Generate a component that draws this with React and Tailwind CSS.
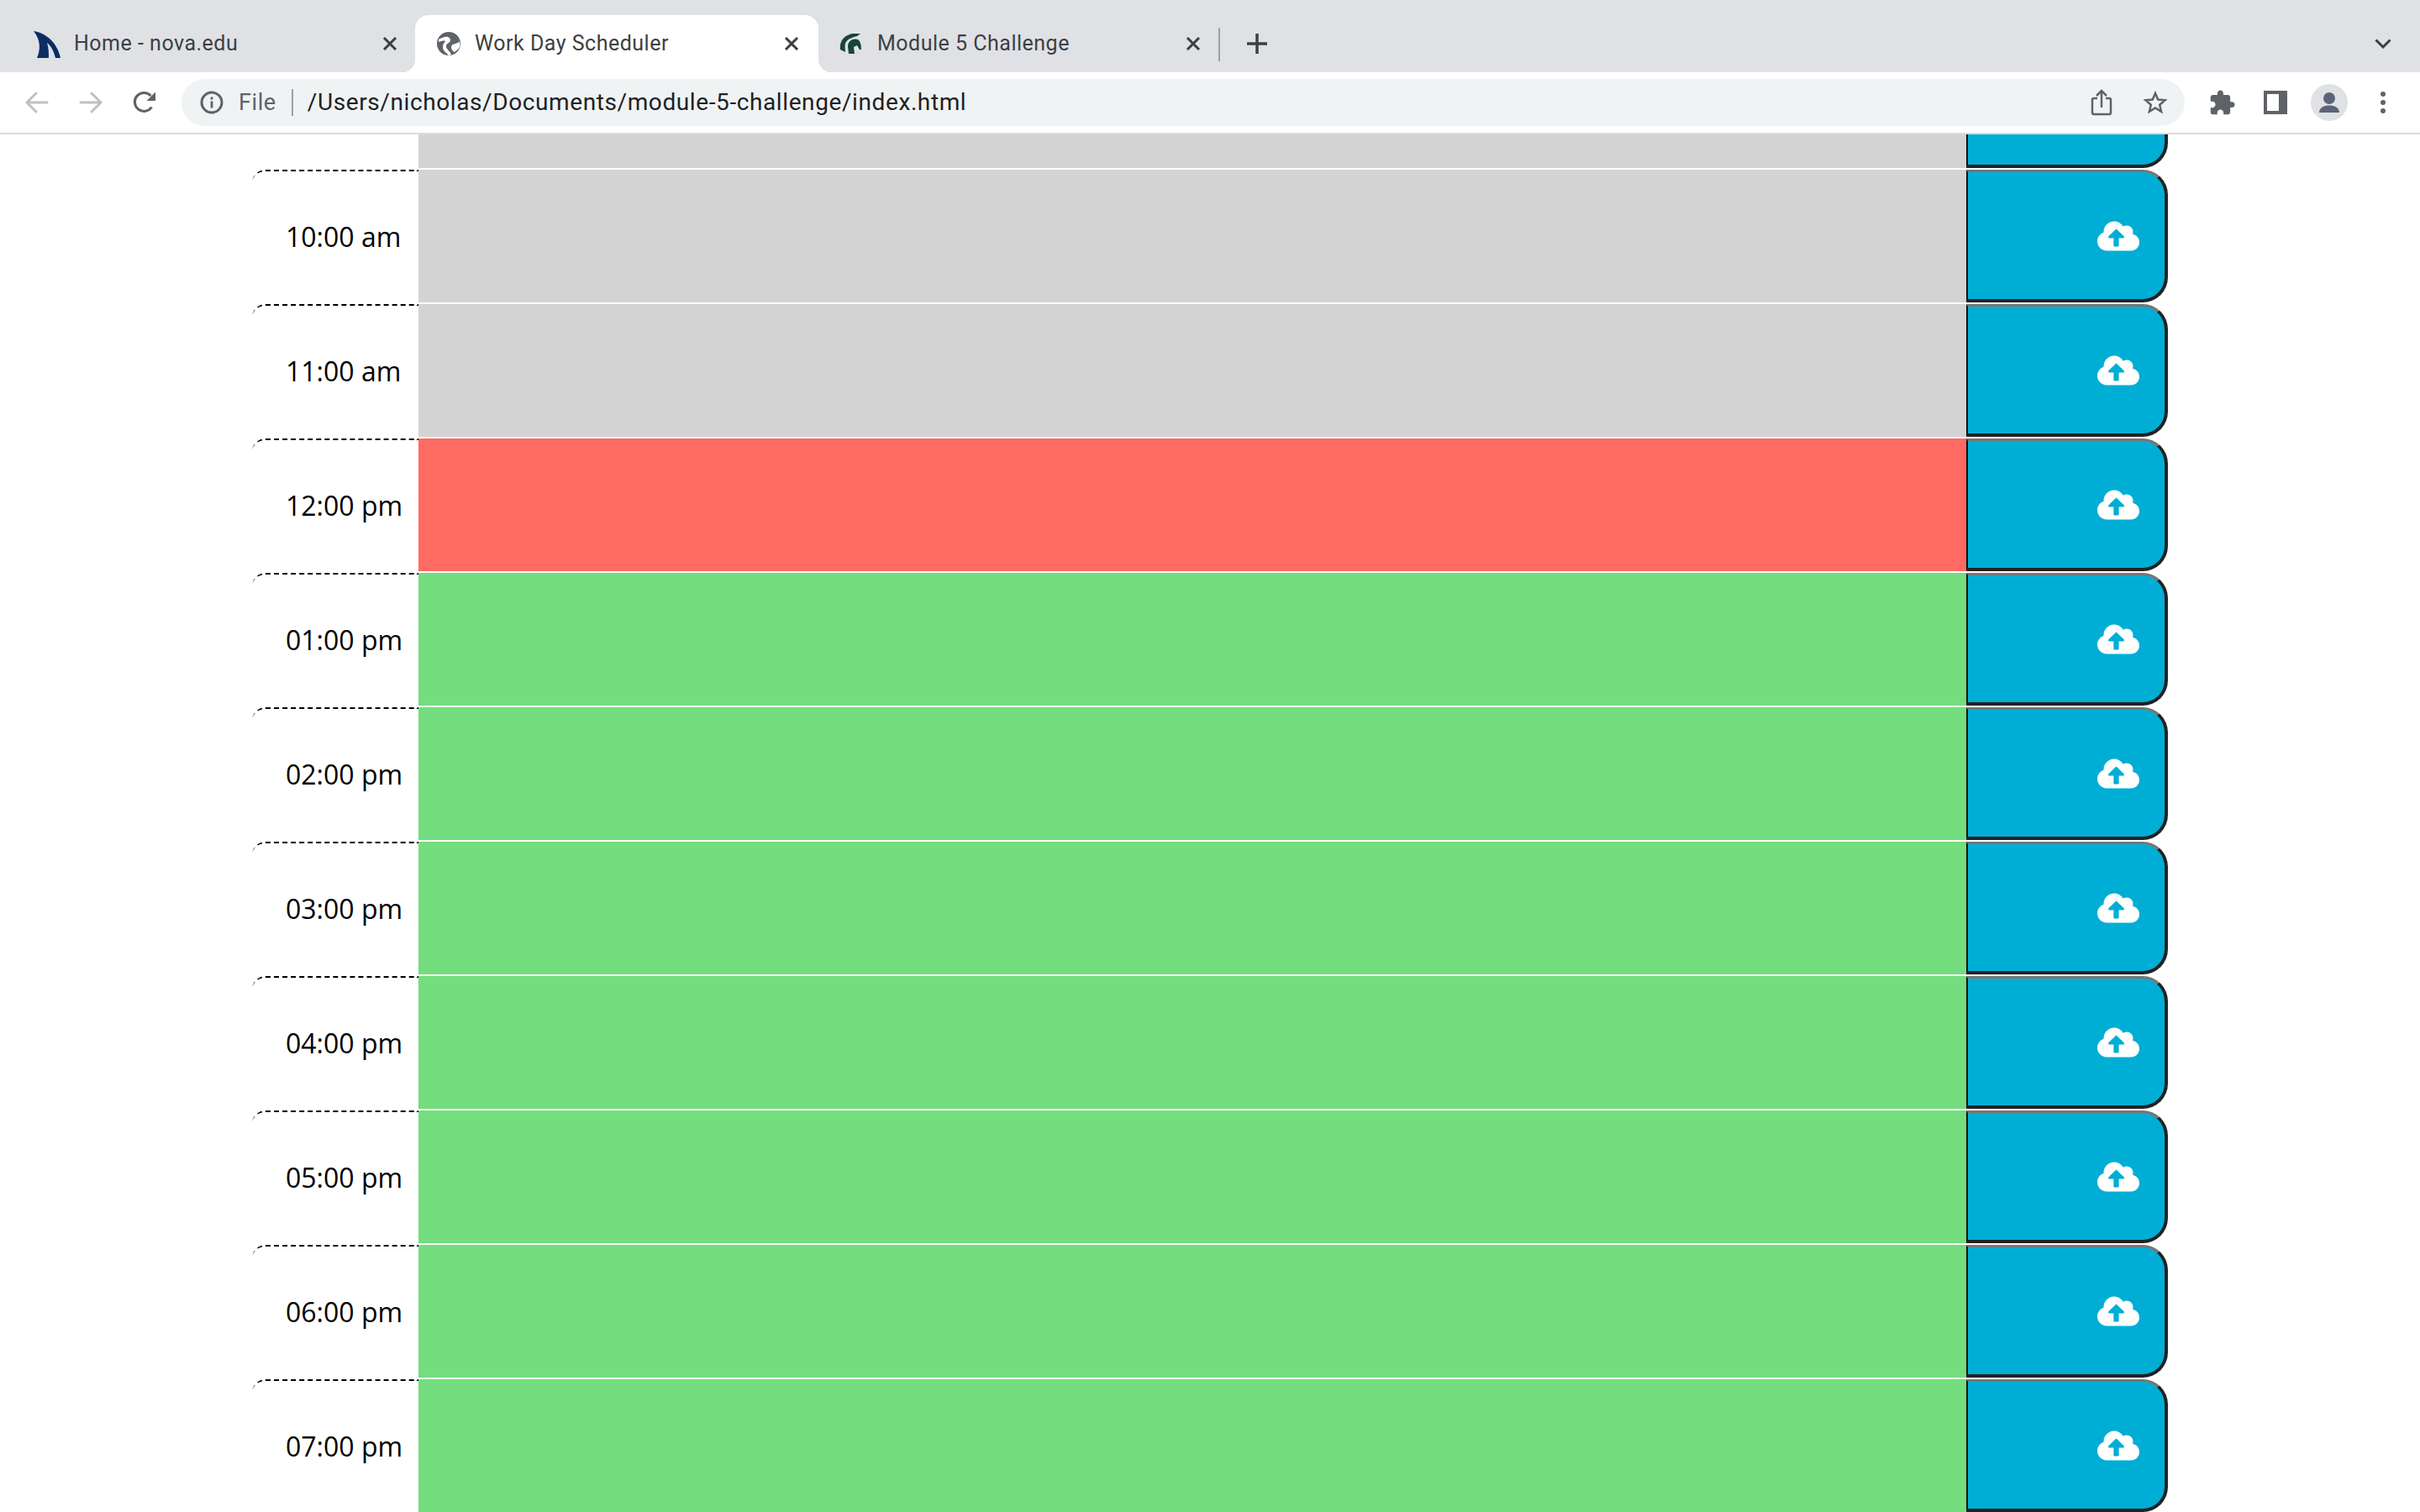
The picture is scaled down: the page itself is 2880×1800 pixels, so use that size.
import React from "react";
import { FaCloudUploadAlt } from "react-icons/fa";

const hours = [
  { label: "09:00 am", color: "bg-[#d3d3d3]" },
  { label: "10:00 am", color: "bg-[#d3d3d3]" },
  { label: "11:00 am", color: "bg-[#d3d3d3]" },
  { label: "12:00 pm", color: "bg-[#ff6a63]" },
  { label: "01:00 pm", color: "bg-[#74dd7e]" },
  { label: "02:00 pm", color: "bg-[#74dd7e]" },
  { label: "03:00 pm", color: "bg-[#74dd7e]" },
  { label: "04:00 pm", color: "bg-[#74dd7e]" },
  { label: "05:00 pm", color: "bg-[#74dd7e]" },
  { label: "06:00 pm", color: "bg-[#74dd7e]" },
  { label: "07:00 pm", color: "bg-[#74dd7e]" },
];

const CloseIcon = () => (
  <svg width="18" height="16" viewBox="0 0 18 16" fill="none" stroke="#3c4043" strokeWidth="3">
    <path d="M2 1l14 14M16 1L2 15" />
  </svg>
);

const NovaIcon = () => (
  <svg width="36" height="36" viewBox="8 8 36 36" className="shrink-0">
    <path
      fill="#0b2d63"
      d="M10 11C20 12 32 20 37 30C40 35 41 39 42 43L36 43C34 35 31 29 26 25C28 31 28 37 28 43L14 43C18 34 19 22 10 11Z"
    />
  </svg>
);

const GlobeIcon = () => (
  <svg width="30" height="30" viewBox="9 9 30 30" className="shrink-0">
    <circle cx="24" cy="24" r="14" fill="#5f6368" />
    <path fill="#fff" d="M12 19C16 17 20 15 23 16C26 17 27 20 25 22C23 24 21 24 21 27C21 31 26 33 27 37L24 38C21 34 17 33 17 28C17 24 19 23 20 21C18 20 15 21 12 22Z" />
    <path fill="#fff" d="M29.700 24.700C32 24 35 23 37 21.500L37.500 27C36 30 34 32 30.500 34C28 32 26.500 29.500 27 28C27.500 26 28 25 29.700 24.700Z" />
  </svg>
);

const SpartanIcon = () => (
  <svg width="28" height="28" viewBox="8 12 28 28" className="shrink-0">
    <path fill="#18453b" d="M10 33C9 24 13 17 24 14L34 14L30 17C22 19 17 22 16 26C15 30 16 33 16 36Z" />
    <path fill="#18453b" d="M19 29C19 22 26 19 31 21C34 23 35 28 35 33L33 33L30 28L26 30L27 38L20 38C20 35 19 32 19 29Z" />
  </svg>
);

const Tab = ({ title, icon, active, className }) => (
  <div
    className={`relative flex h-[68px] items-center ${
      active ? "rounded-t-[16px] bg-white" : ""
    } ${className}`}
  >
    {active && (
      <>
        <span className="absolute bottom-0 left-[-16px] h-[16px] w-[16px] bg-[radial-gradient(circle_at_0_0,#dfe1e5_16px,#ffffff_16.5px)]" />
        <span className="absolute bottom-0 right-[-16px] h-[16px] w-[16px] bg-[radial-gradient(circle_at_100%_0,#dfe1e5_16px,#ffffff_16.5px)]" />
      </>
    )}
    {icon}
    <span className="whitespace-nowrap font-['Roboto',sans-serif] text-[25px] tracking-[0.5px] text-[#3c4043]">
      {title}
    </span>
    <span className="ml-auto flex">
      <CloseIcon />
    </span>
  </div>
);

const ToolbarButton = ({ children }) => (
  <div className="flex h-[64px] w-[64px] items-center justify-center">{children}</div>
);

const BrowserChrome = () => (
  <>
    <div className="flex h-[86px] shrink-0 items-end bg-[#dfe1e5]">
      <Tab
        title="Home - nova.edu"
        icon={<NovaIcon />}
        className="w-[494px] gap-[14px] pl-[38px] pr-[21px]"
      />
      <Tab
        title="Work Day Scheduler"
        icon={<GlobeIcon />}
        active
        className="w-[480px] gap-[16px] pl-[25px] pr-[23px]"
      />
      <Tab
        title="Module 5 Challenge"
        icon={<SpartanIcon />}
        className="w-[476px] gap-[18px] pl-[24px] pr-[21px]"
      />
      <div className="mb-[13px] h-[40px] w-[2px] bg-[#9aa0a6]" />
      <div className="flex h-[68px] w-[88px] items-center justify-center">
        <svg width="26" height="26" viewBox="0 0 26 26" fill="none" stroke="#3c4043" strokeWidth="3.5">
          <path d="M13 1v24M1 13h24" />
        </svg>
      </div>
      <div className="ml-auto flex h-[68px] w-[88px] items-center justify-center">
        <svg width="20" height="12" viewBox="0 0 20 12" fill="none" stroke="#3c4043" strokeWidth="3">
          <path d="M1.5 1.5L10 10L18.5 1.5" />
        </svg>
      </div>
    </div>
    <div className="flex h-[72px] shrink-0 items-center bg-white pl-[12px]">
      <ToolbarButton>
        <svg width="28" height="26" viewBox="0 0 28 26" fill="none" stroke="#bdc1c6" strokeWidth="3" strokeLinecap="round" strokeLinejoin="round">
          <path d="M26 13H3M13 2L2 13l11 11" />
        </svg>
      </ToolbarButton>
      <ToolbarButton>
        <svg width="28" height="26" viewBox="0 0 28 26" fill="none" stroke="#bdc1c6" strokeWidth="3" strokeLinecap="round" strokeLinejoin="round">
          <path d="M2 13h23M15 2l11 11l-11 11" />
        </svg>
      </ToolbarButton>
      <ToolbarButton>
        <svg width="28" height="28" viewBox="0 0 28 28" fill="none">
          <path d="M22.5 19.5A11 11 0 1 1 21.5 6" stroke="#5f6368" strokeWidth="3" />
          <path d="M27 1.5V12H16.5Z" fill="#5f6368" />
        </svg>
      </ToolbarButton>
      <div className="ml-[12px] flex h-[56px] w-[2384px] items-center rounded-full bg-[#eff3f4] pl-[22px] pr-[20px]">
        <svg width="28" height="28" viewBox="0 0 28 28" className="shrink-0">
          <circle cx="14" cy="14" r="12" fill="none" stroke="#5f6368" strokeWidth="3" />
          <rect x="12.6" y="12.5" width="2.8" height="8" fill="#5f6368" />
          <rect x="12.6" y="7.5" width="2.8" height="3" fill="#5f6368" />
        </svg>
        <span className="ml-[18px] font-['Roboto',sans-serif] text-[27px] tracking-[0.6px] text-[#5f6368]">File</span>
        <span className="ml-[18px] h-[32px] w-[2px] bg-[#9aa0a6]" />
        <span className="ml-[17px] whitespace-nowrap font-['Roboto',sans-serif] text-[28px] tracking-[0.6px] text-[#202124]">
          /Users/nicholas/Documents/module-5-challenge/index.html
        </span>
        <div className="ml-auto flex items-center gap-[34px]">
          <svg width="30" height="32" viewBox="0 0 30 32" fill="none" stroke="#5f6368" strokeWidth="2.5">
            <path d="M10 11H6a2 2 0 0 0-2 2v15a2 2 0 0 0 2 2h18a2 2 0 0 0 2-2V13a2 2 0 0 0-2-2h-4" />
            <path d="M15 22V3M9 8l6-6l6 6" />
          </svg>
          <svg width="30" height="30" viewBox="0 0 30 30" fill="none" stroke="#5f6368" strokeWidth="2.5" strokeLinejoin="miter">
            <path d="M15 4l3.2 7.6l8.3 .7l-6.3 5.400l1.900 8.100l-7.100-4.300l-7.100 4.300l1.900-8.100l-6.300-5.400l8.300-.7Z" />
          </svg>
        </div>
      </div>
      <div className="ml-[12px] flex items-center">
        <ToolbarButton>
          <svg width="33" height="33" viewBox="0 0 24 24" fill="#5f6368">
            <path d="M20.5 11H19V7c0-1.1-.9-2-2-2h-4V3.5C13 2.12 11.88 1 10.5 1S8 2.12 8 3.5V5H4c-1.1 0-1.99.9-1.99 2v3.8H3.5c1.49 0 2.7 1.21 2.7 2.7s-1.21 2.7-2.7 2.7H2V20c0 1.1.9 2 2 2h3.8v-1.5c0-1.49 1.21-2.7 2.7-2.7 1.49 0 2.7 1.21 2.7 2.7V22H17c1.1 0 2-.9 2-2v-4h1.5c1.38 0 2.5-1.12 2.5-2.5S21.88 11 20.5 11z" />
          </svg>
        </ToolbarButton>
        <ToolbarButton>
          <svg width="28" height="28" viewBox="0 0 28 28">
            <rect width="28" height="28" fill="#5f6368" />
            <rect x="4" y="4" width="14" height="20" fill="#fff" />
          </svg>
        </ToolbarButton>
        <ToolbarButton>
          <svg width="44" height="44" viewBox="0 0 44 44">
            <circle cx="22" cy="22" r="22" fill="#dfe1e5" />
            <circle cx="22" cy="17" r="7" fill="#5b6477" />
            <path d="M10 34c0-6 6-8.500 12-8.500s12 2.500 12 8.500Z" fill="#5b6477" />
          </svg>
        </ToolbarButton>
        <ToolbarButton>
          <svg width="8" height="28" viewBox="0 0 8 28" fill="#5f6368">
            <circle cx="4" cy="4" r="3" />
            <circle cx="4" cy="14" r="3" />
            <circle cx="4" cy="24" r="3" />
          </svg>
        </ToolbarButton>
      </div>
    </div>
    <div className="h-[2px] shrink-0 bg-[#dadce0]" />
  </>
);

const HourRow = ({ label, color }) => (
  <div className="flex h-[160px] border-t-2 border-white pl-[300px] pr-[300px]">
    <div className="flex w-[198px] items-center rounded-tl-[16px] border-t-2 border-dashed border-black pl-[40px] font-['Open_Sans',sans-serif] text-[32px] text-black">
      {label}
    </div>
    <textarea className={`h-full flex-1 resize-none ${color}`} />
    <button className="flex h-full w-[240px] items-center justify-end rounded-r-[30px] border-t-[3px] border-r-4 border-b-4 border-l-2 border-t-[#767676] border-r-[#222222] border-b-[#222222] border-l-[#111111] bg-[#00aed5] pr-[30px] text-white">
      <FaCloudUploadAlt className="text-[50px]" />
    </button>
  </div>
);

export default function App() {
  return (
    <div className="flex h-[1800px] w-[2880px] flex-col overflow-hidden bg-white">
      <BrowserChrome />
      <main className="flex-1 overflow-hidden">
        <div className="mt-[-120px]">
          {hours.map((h) => (
            <HourRow key={h.label} label={h.label} color={h.color} />
          ))}
        </div>
      </main>
    </div>
  );
}
